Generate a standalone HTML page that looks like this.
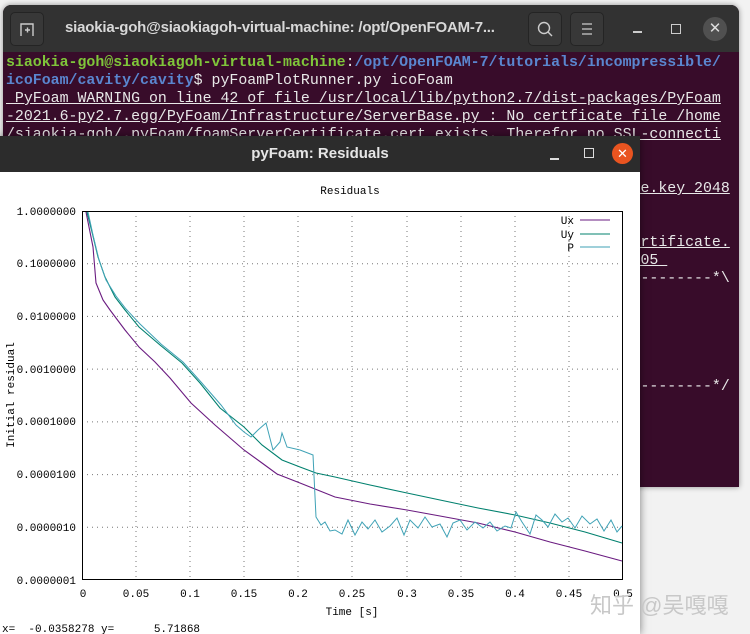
<!DOCTYPE html>
<html><head><meta charset="utf-8">
<style>
html,body{margin:0;padding:0;width:750px;height:634px;overflow:hidden;background:#f2f2f2;position:relative;font-family:"Liberation Sans",sans-serif}
.term{position:absolute;left:3px;top:5px;width:736px;height:482px;background:#380c2a;border-radius:8px 8px 0 0;overflow:hidden;box-shadow:0 0 6px rgba(0,0,0,.4)}
.thead{position:absolute;left:0;top:0;width:736px;height:47px;background:#323232}
.btn{position:absolute;top:7px;width:34px;height:34px;border:1px solid #242424;border-radius:5px;background:#383838;box-sizing:border-box}
.ttl{position:absolute;left:62px;top:14px;color:#d8d8d8;font-weight:bold;font-size:15px;letter-spacing:-0.2px}
.tx{position:absolute;left:3px;top:49px;font-family:"Liberation Mono",monospace;font-size:14.9px;line-height:18px;color:#e8e8e8;white-space:pre}
.u{text-decoration:underline}
.g{color:#7fc63a;font-weight:bold}.b{color:#5a86cf;font-weight:bold}
.plot{position:absolute;left:0;top:136px;width:640px;height:498px;background:#fff;box-shadow:0 0 8px rgba(0,0,0,.5)}
.phead{position:absolute;left:0;top:0;width:640px;height:36px;background:#2c2c2c}
.ptitle{position:absolute;left:0;width:640px;top:9px;text-align:center;color:#e6e6e6;font-weight:bold;font-size:15px}
.wm{position:absolute;left:590px;top:588px;color:#c8c8c8;font-size:22px;font-family:"Liberation Sans","Noto Sans CJK SC",sans-serif}
</style></head><body>
<div class="term">
 <div class="thead">
  <div class="btn" style="left:7px"></div>
  <svg style="position:absolute;left:15px;top:15px" width="18" height="18"><path d="M3 16V4h12v12M7 10h5M9.5 7.5v5" stroke="#ccc" stroke-width="1.4" fill="none"/></svg>
  <div class="ttl">siaokia-goh@siaokiagoh-virtual-machine: /opt/OpenFOAM-7...</div>
  <div class="btn" style="left:525px"></div>
  <svg style="position:absolute;left:533px;top:15px" width="18" height="18"><circle cx="8" cy="8" r="5.5" stroke="#ccc" stroke-width="1.4" fill="none"/><path d="M12 12l4 4" stroke="#ccc" stroke-width="1.4"/></svg>
  <div class="btn" style="left:567px"></div>
  <svg style="position:absolute;left:576px;top:16px" width="16" height="16"><path d="M3 3h10M3 8h10M3 13h10" stroke="#ccc" stroke-width="1.3"/></svg>
  <div style="position:absolute;left:630px;top:26px;width:9px;height:1.5px;background:#ccc"></div>
  <div style="position:absolute;left:668px;top:19px;width:8px;height:8px;border:1.3px solid #ccc"></div>
  <div style="position:absolute;left:700px;top:12px;width:24px;height:24px;border-radius:50%;background:#505050;color:#ddd;font-size:15px;text-align:center;line-height:24px">✕</div>
 </div>
 <div class="tx"><span class="g">siaokia-goh@siaokiagoh-virtual-machine</span>:<span class="b">/opt/OpenFOAM-7/tutorials/incompressible/
icoFoam/cavity/cavity</span>$ pyFoamPlotRunner.py icoFoam
<span class="u"> PyFoam WARNING on line 42 of file /usr/local/lib/python2.7/dist-packages/PyFoam</span>
<span class="u">-2021.6-py2.7.egg/PyFoam/Infrastructure/ServerBase.py : No certficate file /home</span>
<span class="u">/siaokia-goh/.pyFoam/foamServerCertificate.cert exists. Therefor no SSL-connecti</span>


<span class="u">                                                                       e.key 2048</span>


<span class="u">                                                                       rtificate.</span>
<span class="u">                                                                       05 </span>
                                                                       --------*\





                                                                       --------*/</div>
</div>
<div class="plot">
 <div class="phead">
  <div class="ptitle">pyFoam: Residuals</div>
  <div style="position:absolute;left:550px;top:22px;width:9px;height:1.5px;background:#ddd"></div>
  <div style="position:absolute;left:584px;top:12px;width:8px;height:8px;border:1.4px solid #ddd"></div>
  <div style="position:absolute;left:612px;top:7px;width:21px;height:21px;border-radius:50%;background:#e95420;color:#fff;font-size:13px;text-align:center;line-height:21px">✕</div>
 </div>
</div>
<svg style="position:absolute;left:0;top:172px" width="640" height="462" viewBox="0 172 640 462" font-family="Liberation Mono,monospace" font-size="11">
 <text x="350" y="194" text-anchor="middle" fill="#000">Residuals</text>
 <g stroke="#777" stroke-width="1" stroke-dasharray="1,4">
  <path d="M82 263.7H623M82 316.4H623M82 369.1H623M82 421.9H623M82 474.6H623M82 527.3H623"/>
  <path d="M136 211V580M190 211V580M244 211V580M298 211V580M352 211V580M407 211V580M461 211V580M515 211V580M569 211V580"/>
 </g>
 <rect x="82.5" y="211.5" width="540" height="368" fill="none" stroke="#000"/>
 <g fill="#000" text-anchor="end">
  <text x="76" y="215">1.0000000</text><text x="76" y="267">0.1000000</text><text x="76" y="320">0.0100000</text><text x="76" y="373">0.0010000</text><text x="76" y="425">0.0001000</text><text x="76" y="478">0.0000100</text><text x="76" y="531">0.0000010</text><text x="76" y="584">0.0000001</text>
 </g>
 <g fill="#000" text-anchor="middle">
  <text x="83" y="597">0</text><text x="136" y="597">0.05</text><text x="190" y="597">0.1</text><text x="244" y="597">0.15</text><text x="298" y="597">0.2</text><text x="352" y="597">0.25</text><text x="407" y="597">0.3</text><text x="461" y="597">0.35</text><text x="515" y="597">0.4</text><text x="569" y="597">0.45</text><text x="623" y="597">0.5</text>
  <text x="352" y="615">Time [s]</text>
 </g>
 <text transform="translate(14,395) rotate(-90)" text-anchor="middle" fill="#000">Initial residual</text>
 <text x="2" y="632" fill="#000" style="white-space:pre" xml:space="preserve">x=  -0.0358278 y=      5.71868</text>
 <g text-anchor="end" fill="#000"><text x="574" y="224">Ux</text><text x="574" y="238">Uy</text><text x="574" y="251">P</text></g>
 <path d="M580 220h30" stroke="#6a1b80"/><path d="M580 234h30" stroke="#00806e"/><path d="M580 247h30" stroke="#3fa2b6"/>
 <path fill="none" stroke="#6a1b80" stroke-width="1.1" d="M86 212L90 232 93 247 96 283 103 300 110 310 125 330 139 347 155 362 170 378 191 403 215 425 244 450 262 463 277 474 300 483 335 497 370 504 407 510 440 516 478 523 515 532 550 542 585 551 622 561"/>
 <path fill="none" stroke="#00806e" stroke-width="1.1" d="M87 212L92 232 98 257 105 277 115 297 125 310 139 327 160 345 182 363 200 383 220 408 244 427 262 445 282 460 300 467 316 473 335 477 370 485 407 493 440 500 478 508 515 515 550 523 585 532 622 543"/>
 <path fill="none" stroke="#3fa2b6" stroke-width="1" d="M88 212L93 235 99 260 106 280 116 296 126 309 140 324 161 344 183 362 201 382 221 405 236 425 244 432 251 437 258 430 266 423 273 450 280 442 282 433 287 447 300 450 313 455 316 517 321 525 325 522 330 531 335 530 342 534 348 520 355 535 362 522 368 529 375 520 382 532 390 526 397 518 404 535 410 520 418 528 425 517 432 527 440 524 447 537 453 523 460 520 467 530 475 522 483 528 490 522 497 531 505 526 511 528 516 512 522 522 530 534 536 515 542 520 548 527 555 514 562 522 568 518 575 528 582 516 590 524 597 519 604 531 611 520 617 532 622 526"/>
</svg>
<div class="wm">知乎 @吴嘎嘎</div>
</body></html>
